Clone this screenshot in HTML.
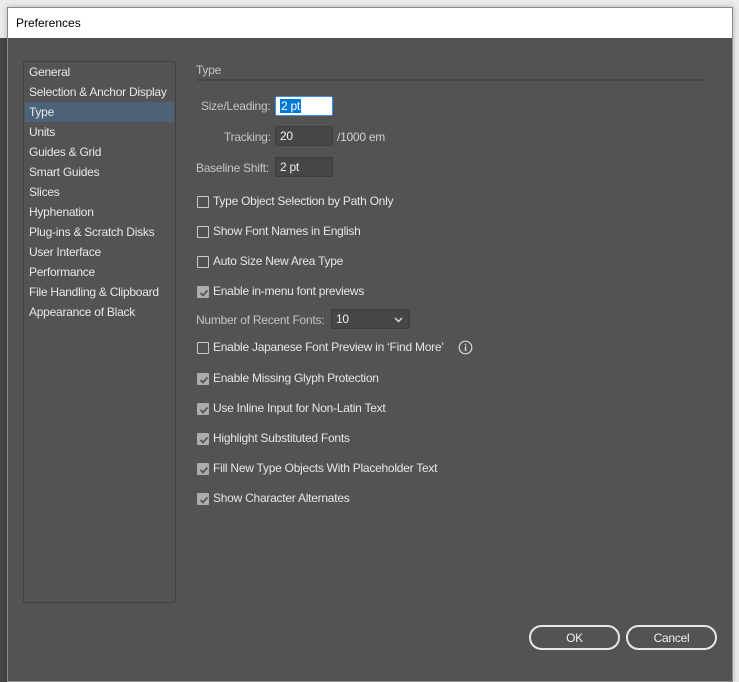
<!DOCTYPE html>
<html><head><style>
*{margin:0;padding:0;box-sizing:border-box}
body{width:739px;height:682px;background:#ececec;position:relative;overflow:hidden;font-family:"Liberation Sans",sans-serif;font-size:12px;letter-spacing:-0.25px}
.strip{position:absolute;left:0;top:38px;width:8px;height:644px;background:#474747}
.dlg{position:absolute;left:7px;top:7px;width:726px;height:675px;border:1px solid #8a8a8a;background:#535353;box-shadow:0 0 6px rgba(0,0,0,.25)}
.title{position:absolute;left:0;top:0;width:100%;height:30px;background:#fff;color:#000;font-size:12px;padding:8px 0 0 8px;letter-spacing:0}
.a{position:absolute;color:#e6e6e6;white-space:nowrap}
.lbl{color:#c4c4c4}
.list{position:absolute;left:15px;top:53px;width:153px;height:542px;border:1px solid #404040;border-radius:2px}
.item{position:absolute;left:1px;width:149px;height:20px;padding:3px 0 0 4px;color:#e8e8e8}
.sel{background:#4b6278}
.inp{position:absolute;width:58px;height:20px;background:#464646;border:1px solid #3c3c3c;border-radius:2px;color:#eee;padding:2px 0 0 4px}
.cb{position:absolute;left:189px;width:12px;height:12px;border:1px solid #c8c8c8;border-radius:1px}
.ck{background:#acacac;border-color:#acacac}
.ck svg{position:absolute;left:1px;top:1px}
.btn{position:absolute;top:617px;width:91px;height:25px;border:2px solid #e8e8e8;border-radius:13px;color:#f0f0f0;text-align:center;padding-top:4px}
</style></head><body>
<div class="strip"></div>
<div class="dlg">
<div class="title">Preferences</div>
<div class="list">
<div class="item" style="top:0px">General</div>
<div class="item" style="top:20px">Selection &amp; Anchor Display</div>
<div class="item sel" style="top:40px">Type</div>
<div class="item" style="top:60px">Units</div>
<div class="item" style="top:80px">Guides &amp; Grid</div>
<div class="item" style="top:100px">Smart Guides</div>
<div class="item" style="top:120px">Slices</div>
<div class="item" style="top:140px">Hyphenation</div>
<div class="item" style="top:160px">Plug-ins &amp; Scratch Disks</div>
<div class="item" style="top:180px">User Interface</div>
<div class="item" style="top:200px">Performance</div>
<div class="item" style="top:220px">File Handling &amp; Clipboard</div>
<div class="item" style="top:240px">Appearance of Black</div>
</div>
<div class="a lbl" style="left:188px;top:55px">Type</div>
<div style="position:absolute;left:188px;top:71px;width:507px;height:2px;background:#474747"></div>
<div class="a lbl" style="left:193px;top:91px">Size/Leading:</div>
<div class="inp" style="left:267px;top:88px;background:#fff;border:1px solid #3b8ee8;color:#fff"><span style="background:#0078d7;padding:0 1px">2 pt</span></div>
<div class="a lbl" style="left:216px;top:122px">Tracking:</div>
<div class="inp" style="left:267px;top:118px">20</div>
<div class="a" style="left:329px;top:122px;color:#d0d0d0">/1000 em</div>
<div class="a lbl" style="left:188px;top:153px">Baseline Shift:</div>
<div class="inp" style="left:267px;top:149px">2 pt</div>

<div class="cb" style="top:188px"></div><div class="a" style="left:205px;top:186px">Type Object Selection by Path Only</div>
<div class="cb" style="top:218px"></div><div class="a" style="left:205px;top:216px">Show Font Names in English</div>
<div class="cb" style="top:248px"></div><div class="a" style="left:205px;top:246px">Auto Size New Area Type</div>
<div class="cb ck" style="top:278px"><svg width="10" height="10"><path d="M1.5 5l2.5 2.5 4.5-5" stroke="#555" stroke-width="1.8" fill="none"/></svg></div><div class="a" style="left:205px;top:276px">Enable in-menu font previews</div>
<div class="a lbl" style="left:188px;top:305px">Number of Recent Fonts:</div>
<div class="inp" style="left:323px;top:301px;width:79px">10<svg style="position:absolute;right:6px;top:7px" width="9" height="6"><path d="M1 1l3.5 3.5 3.5-3.5" stroke="#ddd" stroke-width="1.4" fill="none"/></svg></div>
<div class="cb" style="top:334px"></div><div class="a" style="left:205px;top:332px">Enable Japanese Font Preview in ‘Find More’</div>
<svg style="position:absolute;left:450px;top:332px" width="15" height="15"><circle cx="7.5" cy="7.5" r="6.3" stroke="#d8d8d8" stroke-width="1.2" fill="none"/><rect x="6.8" y="6.5" width="1.5" height="4.5" fill="#d8d8d8"/><rect x="6.8" y="3.8" width="1.5" height="1.5" fill="#d8d8d8"/></svg>
<div class="cb ck" style="top:365px"><svg width="10" height="10"><path d="M1.5 5l2.5 2.5 4.5-5" stroke="#555" stroke-width="1.8" fill="none"/></svg></div><div class="a" style="left:205px;top:363px">Enable Missing Glyph Protection</div>
<div class="cb ck" style="top:395px"><svg width="10" height="10"><path d="M1.5 5l2.5 2.5 4.5-5" stroke="#555" stroke-width="1.8" fill="none"/></svg></div><div class="a" style="left:205px;top:393px">Use Inline Input for Non-Latin Text</div>
<div class="cb ck" style="top:425px"><svg width="10" height="10"><path d="M1.5 5l2.5 2.5 4.5-5" stroke="#555" stroke-width="1.8" fill="none"/></svg></div><div class="a" style="left:205px;top:423px">Highlight Substituted Fonts</div>
<div class="cb ck" style="top:455px"><svg width="10" height="10"><path d="M1.5 5l2.5 2.5 4.5-5" stroke="#555" stroke-width="1.8" fill="none"/></svg></div><div class="a" style="left:205px;top:453px">Fill New Type Objects With Placeholder Text</div>
<div class="cb ck" style="top:485px"><svg width="10" height="10"><path d="M1.5 5l2.5 2.5 4.5-5" stroke="#555" stroke-width="1.8" fill="none"/></svg></div><div class="a" style="left:205px;top:483px">Show Character Alternates</div>

<div class="btn" style="left:521px">OK</div>
<div class="btn" style="left:618px">Cancel</div>
</div>
</body></html>
